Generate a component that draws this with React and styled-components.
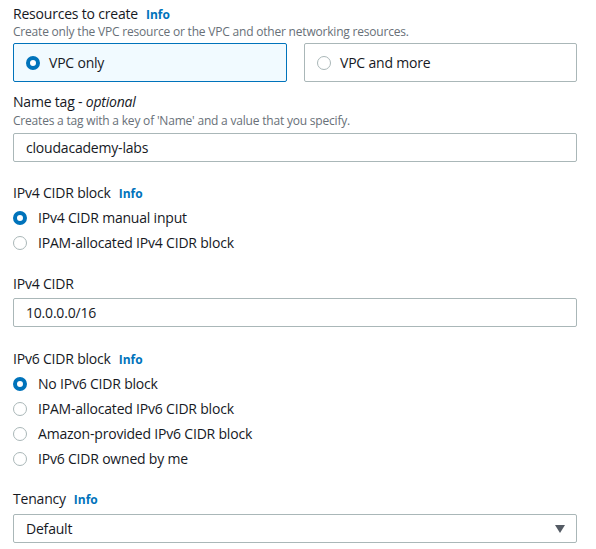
import React from "react";
import styled, { createGlobalStyle } from "styled-components";

const GlobalStyle = createGlobalStyle`
  body {
    margin: 0;
    background: #ffffff;
    font-family: "Open Sans", "Noto Sans", Arial, sans-serif;
    color: #16191f;
  }
`;

const Page = styled("div")`
  width: 564px;
  padding: 4px 0 0 13px;
  display: flex;
  flex-direction: column;
  letter-spacing: -0.2px;
`;

const Section = styled("div")`
  display: flex;
  flex-direction: column;
  margin-top: ${props => props.gap || 0}px;
`;

const Label = styled("div")`
  font-size: 14px;
  line-height: 20px;
  height: 20px;
  color: #16191f;
  em {
    font-style: italic;
  }
`;

const InfoLink = styled("span")`
  font-size: 12px;
  line-height: 1;
  font-weight: 700;
  color: #0073bb;
  margin-left: 8px;
  letter-spacing: 0;
`;

const Description = styled("div")`
  font-size: 12px;
  line-height: 16px;
  color: #687078;
  margin-top: ${props => props.top || 0}px;
`;

const TileRow = styled("div")`
  display: grid;
  grid-template-columns: 274px 273px;
  gap: 17px;
  margin-top: 3px;
`;

const Tile = styled("div")`
  height: 39px;
  box-sizing: border-box;
  border: 1px solid ${props => (props.selected ? "#0073bb" : "#aab7b8")};
  background: ${props => (props.selected ? "#f1faff" : "#ffffff")};
  border-radius: 2px;
  display: flex;
  align-items: center;
  gap: 9px;
  padding-left: 12px;
  font-size: 14px;
`;

const RadioCircle = styled("span")`
  width: 14px;
  height: 14px;
  box-sizing: border-box;
  border-radius: 50%;
  flex-shrink: 0;
  border: ${props => (props.checked ? "4.5px solid #0073bb" : "1px solid #aab7b8")};
  background: #ffffff;
`;

const RadioList = styled("div")`
  display: flex;
  flex-direction: column;
  margin-top: 2px;
`;

const RadioRow = styled("div")`
  height: 25px;
  display: flex;
  align-items: center;
  gap: 11px;
  font-size: 14px;
  color: #16191f;
`;

const Field = styled("div")`
  height: 29px;
  box-sizing: border-box;
  border: 1px solid #aab7b8;
  border-radius: 2px;
  display: flex;
  align-items: center;
  justify-content: space-between;
  padding: 0 11px 0 12px;
  font-size: 14px;
  color: #16191f;
  margin-top: ${props => props.top || 4}px;
`;

const Caret = styled("svg")`
  width: 10px;
  height: 8px;
  fill: #545b64;
`;

const Radio = ({ checked, children }) => (
  <RadioRow>
    <RadioCircle checked={checked} />
    <span>{children}</span>
  </RadioRow>
);

const App = () => (
  <React.Fragment>
    <GlobalStyle />
    <Page>
      <Section>
        <Label>
          Resources to create<InfoLink>Info</InfoLink>
        </Label>
        <Description>
          Create only the VPC resource or the VPC and other networking resources.
        </Description>
        <TileRow>
          <Tile selected>
            <RadioCircle checked />
            <span>VPC only</span>
          </Tile>
          <Tile>
            <RadioCircle />
            <span>VPC and more</span>
          </Tile>
        </TileRow>
      </Section>

      <Section gap={10}>
        <Label>
          Name tag - <em>optional</em>
        </Label>
        <Description top={1}>
          Creates a tag with a key of 'Name' and a value that you specify.
        </Description>
        <Field top={4}>cloudacademy-labs</Field>
      </Section>

      <Section gap={21}>
        <Label>
          IPv4 CIDR block<InfoLink>Info</InfoLink>
        </Label>
        <RadioList>
          <Radio checked>IPv4 CIDR manual input</Radio>
          <Radio>IPAM-allocated IPv4 CIDR block</Radio>
        </RadioList>
      </Section>

      <Section gap={19}>
        <Label>IPv4 CIDR</Label>
        <Field>10.0.0.0/16</Field>
      </Section>

      <Section gap={22}>
        <Label>
          IPv6 CIDR block<InfoLink>Info</InfoLink>
        </Label>
        <RadioList>
          <Radio checked>No IPv6 CIDR block</Radio>
          <Radio>IPAM-allocated IPv6 CIDR block</Radio>
          <Radio>Amazon-provided IPv6 CIDR block</Radio>
          <Radio>IPv6 CIDR owned by me</Radio>
        </RadioList>
      </Section>

      <Section gap={18}>
        <Label>
          Tenancy<InfoLink>Info</InfoLink>
        </Label>
        <Field top={5}>
          <span>Default</span>
          <Caret viewBox="0 0 10 8">
            <path d="M0 0 H10 L5 8 Z" />
          </Caret>
        </Field>
      </Section>
    </Page>
  </React.Fragment>
);

export default App;
